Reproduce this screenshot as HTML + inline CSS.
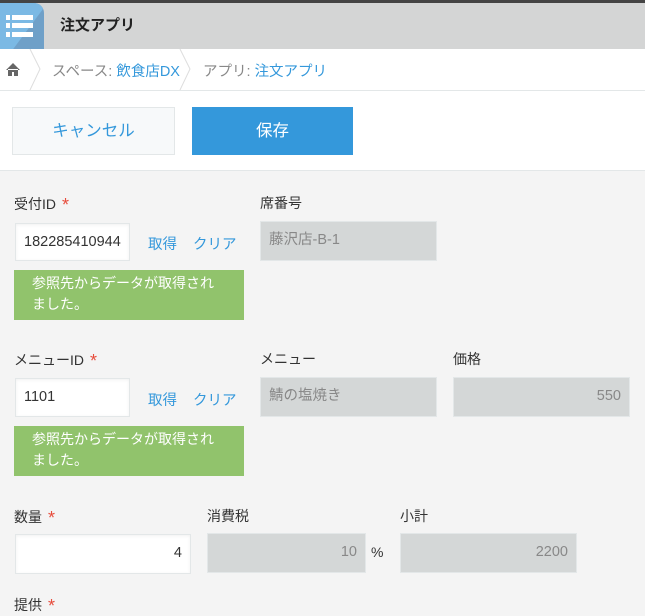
<!DOCTYPE html>
<html><head><meta charset="utf-8"><style>
*{margin:0;padding:0;box-sizing:border-box}
body{width:645px;height:610px;overflow:hidden;background:#f4f4f4;font-family:"Liberation Sans","Noto Sans CJK JP",sans-serif;color:#333;position:relative}
.a{position:absolute}
.lbl{font-size:14px;color:#333}
.req{color:#e74c3c;font-size:18px;margin-left:6px;position:relative;top:2px}
.inp{background:#fff;border:1px solid #e3e7e8;font-size:14.5px;padding:0 8px;line-height:36px;box-shadow:inset 0 1px 3px rgba(0,0,0,.06)}
.ro{background:#d4d7d7;border:1px solid #e3e7e8;font-size:14.5px;color:#888;padding:0 8px;line-height:37px}
.lnk{color:#3498db;font-size:14.5px}
.ok{background:#91c36c;color:#fff;font-size:14px;line-height:21px;padding:3px 18px 0}
</style></head><body>
<div class="a" style="left:0;top:0;width:645px;height:3px;background:#444"></div>
<div class="a" style="left:0;top:3px;width:645px;height:46px;background:#d4d5d5"></div>
<div class="a" style="left:0;top:3px;width:44px;height:46px;background:#6fa0c8;border-radius:0 10px 0 0;overflow:hidden">
<div class="a" style="left:0;top:0;width:44px;height:46px;background:#7bb9e4;clip-path:polygon(0 0,100% 0,100% 10%,30% 100%,0 100%)"></div>
<div class="a" style="left:6px;top:12px;width:4px;height:5px;background:#fff"></div>
<div class="a" style="left:12px;top:12px;width:21px;height:5px;background:#fff"></div>
<div class="a" style="left:6px;top:20px;width:4px;height:5px;background:#fff"></div>
<div class="a" style="left:12px;top:20px;width:21px;height:5px;background:#fff"></div>
<div class="a" style="left:6px;top:29px;width:4px;height:5px;background:#fff"></div>
<div class="a" style="left:12px;top:29px;width:21px;height:5px;background:#fff"></div>
</div>
<div class="a" style="left:60px;top:14px;font-size:15px;font-weight:bold;color:#222">注文アプリ</div>
<div class="a" style="left:0;top:49px;width:645px;height:122px;background:#fff;border-bottom:1px solid #e3e7e8"></div>
<div class="a" style="left:0;top:90px;width:645px;height:1px;background:#e3e7e8"></div>
<svg class="a" style="left:0;top:49px" width="645" height="41"><path d="M30 0 L40 20 L30 41 M180 0 L190 20 L180 41" stroke="#ddd" fill="none"/><path d="M6 21 L13 14 L20 21 Z M8 20 V27 H12 V23 H14 V27 H18 V20 Z" fill="#666"/></svg>
<div class="a" style="left:52px;top:60px;font-size:14.5px;color:#888">スペース: <span style="color:#3498db">飲食店DX</span></div>
<div class="a" style="left:203px;top:60px;font-size:14.5px;color:#888">アプリ: <span style="color:#3498db">注文アプリ</span></div>
<div class="a" style="left:12px;top:107px;width:163px;height:48px;background:#f7f9fa;border:1px solid #e3e7e8;color:#3498db;font-size:16.5px;text-align:center;line-height:46px">キャンセル</div>
<div class="a" style="left:192px;top:107px;width:161px;height:48px;background:#3498db;color:#fff;font-size:16.5px;text-align:center;line-height:48px">保存</div>

<div class="a lbl" style="left:14px;top:193px">受付ID<span class="req">*</span></div>
<div class="a inp" style="left:15px;top:223px;width:115px;height:38px;overflow:hidden;white-space:nowrap">182285410944</div>
<div class="a lnk" style="left:148px;top:233px">取得</div>
<div class="a lnk" style="left:193px;top:233px">クリア</div>
<div class="a lbl" style="left:260px;top:193px">席番号</div>
<div class="a ro" style="left:260px;top:221px;width:177px;height:40px">藤沢店-B-1</div>
<div class="a ok" style="left:14px;top:270px;width:230px;height:50px">参照先からデータが取得され<br>ました。</div>

<div class="a lbl" style="left:14px;top:349px">メニューID<span class="req">*</span></div>
<div class="a inp" style="left:15px;top:378px;width:115px;height:39px">1101</div>
<div class="a lnk" style="left:148px;top:389px">取得</div>
<div class="a lnk" style="left:193px;top:389px">クリア</div>
<div class="a lbl" style="left:260px;top:349px">メニュー</div>
<div class="a ro" style="left:260px;top:377px;width:177px;height:40px">鯖の塩焼き</div>
<div class="a lbl" style="left:453px;top:349px">価格</div>
<div class="a ro" style="left:453px;top:377px;width:177px;height:40px;text-align:right">550</div>
<div class="a ok" style="left:14px;top:426px;width:230px;height:50px">参照先からデータが取得され<br>ました。</div>

<div class="a lbl" style="left:14px;top:506px">数量<span class="req">*</span></div>
<div class="a inp" style="left:15px;top:534px;width:176px;height:40px;text-align:right">4</div>
<div class="a lbl" style="left:207px;top:506px">消費税</div>
<div class="a ro" style="left:207px;top:533px;width:159px;height:40px;text-align:right">10</div>
<div class="a lbl" style="left:371px;top:544px">%</div>
<div class="a lbl" style="left:400px;top:506px">小計</div>
<div class="a ro" style="left:400px;top:533px;width:177px;height:40px;text-align:right">2200</div>
<div class="a lbl" style="left:14px;top:594px">提供<span class="req">*</span></div>
</body></html>
